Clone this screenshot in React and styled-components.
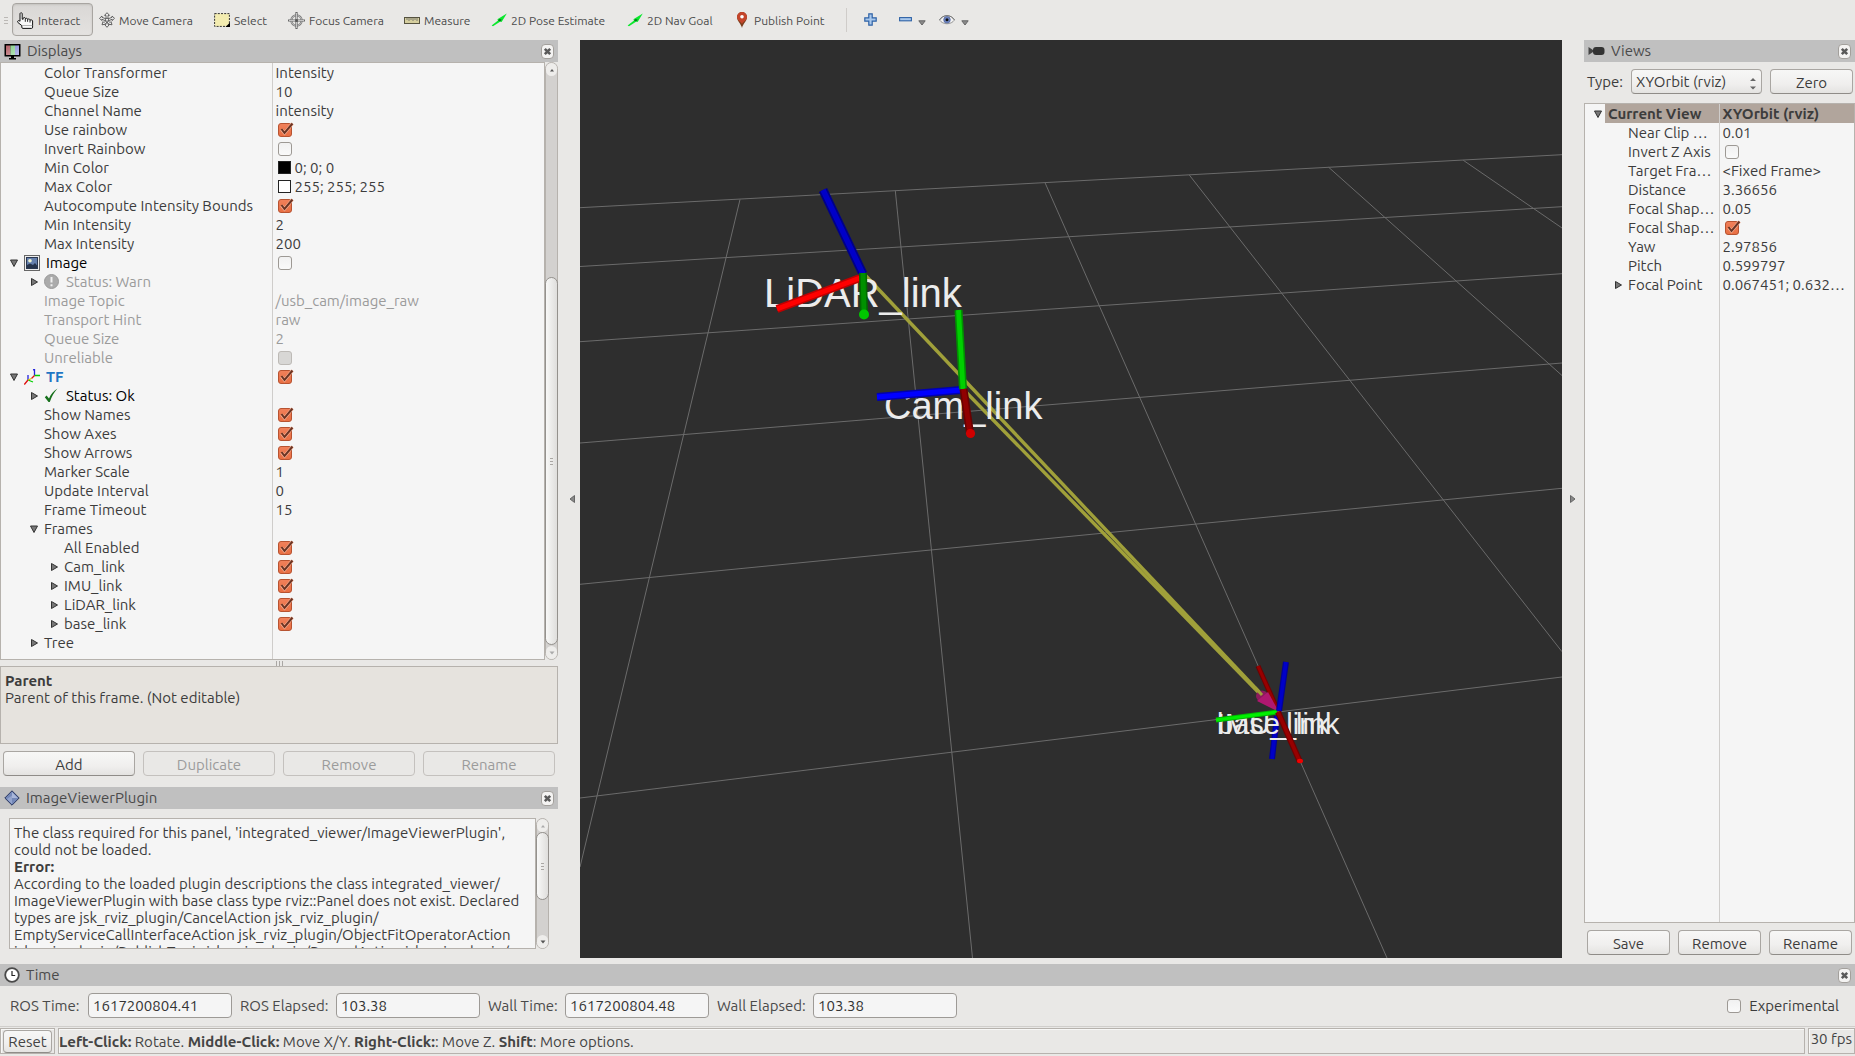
import React, { useId, useState } from "react";
import styled, { createGlobalStyle, css } from "styled-components";

const c = {
  window: "#e9e8e6",
  title: "#c0c0c0",
  base: "#f5f5f5",
  text: "#3c3c3c",
  dim: "#9b9b9b",
  line: "#b6b2ad",
  edge: "#9f9c98",
  scene: "#2e2e2e",
};

const Global = createGlobalStyle`
  *, *::before, *::after { box-sizing: border-box; }
  body {
    margin: 0;
    background: ${c.window};
    color: ${c.text};
    font: 15px/17px Ubuntu, "Noto Sans", "Open Sans", sans-serif;
  }
  button, input, select { font: inherit; color: inherit; margin: 0; }
`;

const Window = styled.div`
  display: flex;
  flex-direction: column;
  height: 100vh;
  overflow: hidden;
`;

/* ---------- toolbar ---------- */

const Toolbar = styled.header`
  display: flex;
  align-items: center;
  height: 40px;
  flex: none;
  padding: 3px 4px 4px 3px;
  font-size: 12px;
  color: #4c4c4c;
`;

const ToolGrip = styled.svg`
  width: 9px;
  flex: none;
`;

const Tool = styled.button`
  display: flex;
  align-items: center;
  gap: 4px;
  width: ${(p) => p.$width}px;
  height: 33px;
  padding: 1px 0 0 5px;
  border: 1px solid transparent;
  border-radius: 4px;
  background: transparent;
  white-space: nowrap;
  ${(p) =>
    p.$active &&
    css`
      padding-left: 4px;
      border-color: #a8a5a1;
      background: linear-gradient(#d9d7d5, #e4e2e0);
      box-shadow: inset 0 1px 2px #c4c2bf;
    `}
  svg { flex: none; }
`;

const ToolDivider = styled.span`
  width: 1px;
  height: 24px;
  margin: 0 12px 0 6px;
  background: #cfccc9;
`;

const MiniTool = styled.button`
  display: flex;
  align-items: center;
  gap: 6px;
  height: 24px;
  padding: 0 5px;
  margin-right: ${(p) => p.$after}px;
  border: 0;
  background: transparent;
  svg:nth-child(2) { margin-top: 6px; }
`;

/* ---------- docks ---------- */

const Main = styled.main`
  display: flex;
  flex: 1;
  min-height: 0;
  margin-bottom: 6px;
`;

const Dock = styled.aside`
  display: flex;
  flex-direction: column;
  flex: none;
  width: ${(p) => p.$width}px;
  min-height: 0;
`;

const TitleBar = styled.div`
  display: flex;
  align-items: center;
  gap: 6px;
  height: 22px;
  flex: none;
  padding: 0 4px;
  background: ${c.title};
  color: #4a4a4a;
  h2 { flex: 1; margin: 0; font: inherit; line-height: 22px; }
`;

const CloseButton = styled.button`
  display: grid;
  place-items: center;
  width: 13px;
  height: 15px;
  padding: 0;
  border: 1px solid #a3a09c;
  border-radius: 4px;
  background: #f4f3f2;
`;

const Handle = styled.button`
  display: flex;
  align-items: center;
  justify-content: center;
  width: 22px;
  flex: none;
  padding: 0 0 0 ${(p) => p.$inset}px;
  border: 0;
  background: transparent;
`;

const TreeArea = styled.div`
  display: flex;
  flex: 1;
  min-height: 0;
`;

const TreeFrame = styled.div`
  flex: 1;
  min-width: 0;
  border: 1px solid ${c.line};
  background: ${c.base};
  overflow: hidden;
`;

const TreeTable = styled.table`
  width: 100%;
  height: 100%;
  table-layout: fixed;
  border-collapse: collapse;
  td { padding: 0; overflow: hidden; white-space: nowrap; }
  td:first-child { border-right: 1px solid #cfcdcb; }
  col:first-child { width: ${(p) => p.$nameWidth}px; }
`;

const Row = styled.tr`
  height: 19px;
  line-height: 19px;
  color: ${(p) => (p.$tone === "dim" ? c.dim : p.$tone === "black" ? "#000" : c.text)};
  font-weight: ${(p) => (p.$selected ? 700 : 400)};
  ${(p) =>
    p.$selected &&
    css`
      td { background: #b1a59c; }
      td:first-child { background: linear-gradient(90deg, ${c.base} 20px, #b1a59c 20px); }
    `}
`;

const NameCell = styled.div`
  display: flex;
  align-items: center;
  height: 19px;
  padding-left: ${(p) => 3 + p.$level * 20}px;
  svg { flex: none; }
`;

const Branch = styled.span`
  display: flex;
  align-items: center;
  justify-content: center;
  width: 20px;
  flex: none;
`;

const RowIcon = styled.span`
  display: flex;
  width: 22px;
  flex: none;
`;

const RowName = styled.span`
  ${(p) => p.$accent && css`color: #1f76c4; font-weight: 700;`}
`;

const ValueCell = styled.div`
  display: flex;
  align-items: center;
  gap: 4px;
  height: 19px;
  padding-left: ${(p) => (p.$boxed ? 5 : 3)}px;
`;

const Swatch = styled.i`
  width: 13px;
  height: 13px;
  border: 1px solid #222;
  background: ${(p) => p.$color};
`;

/* ---------- controls ---------- */

const CheckWrap = styled.span`
  position: relative;
  display: inline-flex;
  width: 14px;
  height: 14px;
  svg {
    position: absolute;
    left: 0;
    top: -2px;
    pointer-events: none;
  }
`;

const CheckInput = styled.input`
  appearance: none;
  width: 14px;
  height: 14px;
  border: 1px solid #9d9994;
  border-radius: 3px;
  background: linear-gradient(#f1f1f1, #fafafa);
  &:checked { border-color: #b75331; background: linear-gradient(#f0805a, #e96f43); }
  &:disabled { border-color: #bdbab6; background: #d8d7d5; }
`;

const Push = styled.button`
  height: 25px;
  flex: ${(p) => (p.$fixed ? "none" : "1 1 0")};
  width: ${(p) => (p.$fixed ? `${p.$fixed}px` : "auto")};
  min-width: 0;
  padding: 1px 0 0;
  border: 1px solid #a9a6a2;
  border-bottom-color: #8f8c88;
  border-radius: 4px;
  background: linear-gradient(#f7f7f6, #f0efee 60%, #e4e3e1);
  &:disabled {
    border-color: #c4c1be;
    background: #e9e8e6;
    color: ${c.dim};
  }
`;

const ButtonRow = styled.div`
  display: flex;
  flex: none;
  gap: 8px;
  padding: 7px 3px ${(p) => p.$bottom}px;
`;

const Bar = styled.div`
  display: flex;
  flex-direction: column;
  flex: none;
  width: 13px;
  border: 1px solid ${c.line};
  border-radius: 7px;
  background: #d3d1cf;
`;

const BarEnd = styled.button`
  display: grid;
  place-items: center;
  height: 13px;
  flex: none;
  padding: 0;
  border: 0;
  border-radius: 6px;
  background: #eeedeb;
`;

const BarSpace = styled.div`
  flex: ${(p) => p.$share} 1 0;
`;

const BarThumb = styled.div`
  display: grid;
  place-items: center;
  flex: ${(p) => p.$share} 1 0;
  margin: 0 -1px;
  border: 1px solid #94918d;
  border-radius: 7px;
  background: linear-gradient(90deg, #f8f8f7, #dfdedc);
`;

const Splitter = styled.div`
  display: grid;
  place-items: center;
  height: 6px;
  flex: none;
`;

const Description = styled.section`
  height: 78px;
  flex: none;
  padding: 5px 4px;
  border: 1px solid ${c.line};
  background: #e6e3de;
  h3, p { margin: 0; font-size: 15px; line-height: 17px; }
`;

const PluginBody = styled.div`
  display: flex;
  height: 149px;
  flex: none;
  padding: 9px;
`;

const PluginText = styled.div`
  flex: 1;
  min-width: 0;
  padding: 5px 4px;
  border: 1px solid ${c.line};
  background: ${c.base};
  overflow: hidden;
  white-space: nowrap;
`;

const Viewport = styled.section`
  flex: 1;
  min-width: 0;
  background: ${c.scene};
  svg { display: block; width: 100%; height: 100%; }
  text { font-family: "Liberation Sans", Arial, sans-serif; fill: #ececec; }
`;

const TypeRow = styled.div`
  display: flex;
  align-items: center;
  flex: none;
  gap: 8px;
  padding: 7px 3px 9px;
  label { flex: 1; }
`;

const SelectWrap = styled.span`
  position: relative;
  svg { position: absolute; right: 5px; top: 8px; pointer-events: none; }
`;

const Select = styled.select`
  appearance: none;
  display: block;
  width: 131px;
  height: 25px;
  padding: 0 4px;
  border: 1px solid #a9a6a2;
  border-bottom-color: #8f8c88;
  border-radius: 4px;
  background: linear-gradient(#f7f7f6, #f0efee 60%, #e4e3e1);
`;

/* ---------- time dock and status ---------- */

const TimeBody = styled.div`
  display: flex;
  align-items: center;
  justify-content: space-between;
  flex: none;
  padding: 7px 16px 8px 10px;
`;

const TimeFields = styled.div`
  display: grid;
  grid-template-columns: 70px 144px 88px 144px 69px 144px 88px 144px;
  align-items: center;
  column-gap: 8px;
  white-space: nowrap;
  color: #4a4a4a;
`;

const Field = styled.input`
  width: 100%;
  height: 25px;
  padding: 0 4px;
  border: 1px solid #9d9a96;
  border-radius: 4px;
  background: ${c.base};
  color: #333;
`;

const Option = styled.label`
  display: flex;
  align-items: center;
  gap: 8px;
`;

const StatusBar = styled.footer`
  display: flex;
  gap: 3px;
  height: 30px;
  flex: none;
  padding: 1px 0 2px;
  border-top: 1px solid #d0cecb;
  color: #444;
`;

const StatusCell = styled.div`
  display: flex;
  align-items: ${(p) => (p.$top ? "flex-start" : "center")};
  flex: ${(p) => (p.$grow ? 1 : "none")};
  padding: 1px ${(p) => (p.$grow ? 0 : 2)}px;
  border: 1px solid ${c.line};
  box-shadow: inset 1px 1px 0 #f8f8f7;
  white-space: pre;
`;

const Reset = styled(Push)`
  height: 23px;
  padding: 0;
`;

/* ---------- small drawings ---------- */

const Arrow = ({ open }) => (
  <svg width="10" height="10" viewBox="0 0 10 10">
    <path d={open ? "M1.5 2H8.5L5 8.5Z" : "M2.5 1.5V8.5L8.5 5Z"} fill="#777" stroke="#333" />
  </svg>
);

const Drop = () => (
  <svg width="8" height="6" viewBox="0 0 8 6">
    <path d="M.8.8H7.2L4 5Z" fill="#8a8a8a" stroke="#666" />
  </svg>
);

const Tri = ({ dir, dim }) => (
  <svg width="6" height="4" viewBox="0 0 6 4">
    <path d={dir === "up" ? "M1 3.5L3 1L5 3.5Z" : "M.5 .5H5.5L3 3.5Z"} fill={dim ? "#aaa" : "#555"} />
  </svg>
);

const Side = ({ dir }) => (
  <svg width="6" height="8" viewBox="0 0 6 8">
    <path d={dir === "left" ? "M5.5 .5V7.5L1 4Z" : "M.5 .5V7.5L5 4Z"} fill="#888" stroke="#666" />
  </svg>
);

const Cross = () => (
  <svg width="9" height="9" viewBox="0 0 9 9">
    <path d="M1.8 1.8L7.2 7.2M7.2 1.8L1.8 7.2" stroke="#5a5a5a" strokeWidth="2.6" />
  </svg>
);

const HandIcon = () => (
  <svg width="17" height="17" viewBox="0 0 17 17">
    <path
      d="M3 1.600C3.400.4 5 .5 5.200 1.600V7.200H6.200V6.200C6.800 5.200 8.100 5.400 8.300 6.200V6.900C8.800 6 10.300 6.100 10.600 7V7.500C11.200 6.700 12.700 6.800 13 7.800V8.300C13.800 7.500 15.500 7.800 15.600 9V15.200C15.600 16 15.200 16.400 14.500 16.400H6C5.200 16.400 4.800 16 4.800 15.200V13.600L.8 10.400C.2 9.400 1 8.200 2.200 8.700L3 9.300Z"
      fill="#f8f8f8"
      stroke="#111"
    />
    <path d="M8.300 7V9.800M10.600 7.500V9.800M13 8.200V10.500" stroke="#111" strokeWidth=".9" />
    <path d="M5 13.500H15.500" stroke="#999" strokeWidth=".7" />
  </svg>
);

const MoveIcon = () => (
  <svg width="16" height="16" viewBox="0 0 16 16" fill="#eee" stroke="#555" strokeWidth=".9">
    <path d="M8 .7L10.5 3.4H9V6.8L13 5.4V4L15.5 6.3L13.2 8.6V7.2L9 9V12.4H10.5L8 15.3L5.5 12.4H7V9L2.8 7.2V8.6L.5 6.3L3 4V5.4L7 6.8V3.4H5.5Z" />
    <path d="M3 12.8L4 9.6L5 10.6L8 7.6L11 10.6L12 9.6L13 12.8L9.8 12.2L8 10L6.2 12.2Z" />
    <circle cx="8" cy="7.8" r="1.6" />
  </svg>
);

const SelectIcon = () => (
  <svg width="16" height="14" viewBox="0 0 16 14">
    <rect x=".6" y=".6" width="14.8" height="12.8" fill="#f3ecb0" stroke="#333" strokeDasharray="2 1.2" />
    <path d="M16 9.5V14H11.5Z" fill="#000" />
  </svg>
);

const FocusIcon = () => (
  <svg width="17" height="17" viewBox="0 0 17 17" fill="none">
    <circle cx="8.5" cy="8.5" r="5.2" stroke="#777" strokeWidth="2" />
    <circle cx="8.5" cy="8.5" r="5.2" stroke="#ddd" strokeWidth=".7" />
    <path d="M8.5 0V17M0 8.5H17" stroke="#666" strokeWidth="2.2" />
    <path d="M8.5 1V16M1 8.5H16" stroke="#ddd" strokeWidth=".8" />
    <circle cx="8.5" cy="8.5" r="1.5" fill="#555" />
  </svg>
);

const RulerIcon = () => (
  <svg width="16" height="8" viewBox="0 0 16 8">
    <rect x=".5" y="1.5" width="15" height="6" fill="#d6cf9f" stroke="#55523f" />
    <path d="M3 2V4M5 2V5M7 2V4M9 2V5M11 2V4M13 2V5" stroke="#666" strokeWidth=".8" />
  </svg>
);

const GreenArrow = () => (
  <svg width="16" height="14" viewBox="0 0 16 14">
    <path d="M.6 12.6L7 7.4L6.4 6.2L15.8.6L10.6 9L9.4 8.4L2 13.2Z" fill="#0be82e" />
    <path d="M7 7.4L9.4 8.4L10.6 6.4L8.4 6Z" fill="#067a18" />
  </svg>
);

const PinIcon = () => (
  <svg width="16" height="16" viewBox="0 0 16 16">
    <path d="M8 16C7.2 12 3 9.2 3 5a5 5 0 0 1 10 0C13 9.2 8.8 12 8 16Z" fill="#7a3d1c" />
    <path d="M8 12C6.5 9.5 3 8.2 3 5a5 5 0 0 1 10 0C13 8.2 9.5 9.5 8 12Z" fill="#c4452b" />
    <circle cx="8" cy="4.8" r="1.8" fill="#fff" />
  </svg>
);

const PlusIcon = () => (
  <svg width="13" height="13" viewBox="0 0 13 13">
    <path d="M4.8.8H8.2V4.8H12.2V8.2H8.2V12.2H4.8V8.2H.8V4.8H4.8Z" fill="#a9c8ec" stroke="#2f62a6" strokeWidth="1.2" />
  </svg>
);

const MinusIcon = () => (
  <svg width="13" height="13" viewBox="0 0 13 13">
    <rect x=".6" y="4.6" width="11.8" height="3.2" fill="#a9c8ec" stroke="#2f62a6" strokeWidth="1.1" />
  </svg>
);

const EyeIcon = () => (
  <svg width="16" height="12" viewBox="0 0 16 12">
    <path d="M.5 6C4 .2 12 .2 15.5 6C12 11 4 11 .5 6Z" fill="#f2f2f2" stroke="#999" />
    <path d="M.5 6C4 .2 12 .2 15.5 6" fill="none" stroke="#777" />
    <circle cx="8" cy="5.8" r="3.3" fill="#6f86c0" stroke="#3f5596" strokeWidth=".6" />
    <circle cx="8" cy="5.8" r="1.5" fill="#111" />
  </svg>
);

const MonitorIcon = () => (
  <svg width="17" height="17" viewBox="0 0 17 17">
    <defs>
      <linearGradient id="screen" x1="0" y1="0" x2="1" y2="1">
        <stop offset="0" stopColor="#fff" stopOpacity="0" />
        <stop offset="1" stopColor="#fff" stopOpacity=".45" />
      </linearGradient>
    </defs>
    <rect x=".5" y="1" width="16" height="12.5" rx=".6" fill="#000" />
    <path d="M2 2.500H6.500V12H2Z" fill="#b35f66" />
    <path d="M6.500 2.500H11V12H6.500Z" fill="#83cf88" />
    <path d="M11 2.500H15V12H11Z" fill="#8085d6" />
    <path d="M2 2.500H15V12H2Z" fill="url(#screen)" />
    <path d="M7 13H10V15H12V16.500H5V15H7Z" fill="#000" />
  </svg>
);

const DiamondIcon = () => (
  <svg width="16" height="16" viewBox="0 0 16 16">
    <path d="M8 .8L15.2 8L8 15.2L.8 8Z" fill="#7488b8" stroke="#27355e" />
    <path d="M8 2.2L13.8 8H8Z" fill="#a9b7da" />
    <path d="M8 14L3 9L8 5.5Z" fill="#93a4cd" />
  </svg>
);

const CameraIcon = () => (
  <svg width="17" height="10" viewBox="0 0 17 10">
    <path d="M.5 1L5 4V6L.5 9Z" fill="#444" />
    <rect x="5" y="1" width="11.5" height="8" rx="3" fill="#333" />
  </svg>
);

const ClockIcon = () => (
  <svg width="16" height="16" viewBox="0 0 16 16" fill="none">
    <circle cx="8" cy="8" r="6.8" fill="#fff" stroke="#4a4a4a" strokeWidth="1.8" />
    <path d="M8 4V8.5H11.2" stroke="#222" strokeWidth="1.2" />
  </svg>
);

const PictureIcon = () => (
  <svg width="16" height="16" viewBox="0 0 16 16">
    <rect x=".5" y=".5" width="15" height="15" fill="#eee" stroke="#666" />
    <rect x="2.5" y="2.5" width="11" height="11" fill="#6580ad" stroke="#2b3850" />
    <path d="M3 13V10L6 8.5L9 10L11 8L13 10.5V13Z" fill="#26344c" />
    <circle cx="6" cy="5.8" r="1.8" fill="#f1f3d0" />
  </svg>
);

const WarnIcon = () => (
  <svg width="16" height="16" viewBox="0 0 16 16">
    <circle cx="7.5" cy="7.5" r="7" fill="#ababab" stroke="#9a9a9a" />
    <path d="M7.5 3V8.5M7.5 10.2V12.2" stroke="#f0f0f0" strokeWidth="2" />
  </svg>
);

const TfIcon = () => (
  <svg width="16" height="16" viewBox="0 0 16 16" fill="none" strokeWidth="1.3">
    <path d="M10.5 6.500V.5L9 .8M4 11V6" stroke="#2222dd" />
    <path d="M10.5 6.500H16M4 11L9 13" stroke="#00d000" />
    <path d="M10.5 6.500L7.500 9.500M4 11L.3 15.500" stroke="#e01010" />
    <path d="M7.500 9.500L4 11" stroke="#d0c000" />
  </svg>
);

const OkIcon = () => (
  <svg width="14" height="15" viewBox="0 0 14 15">
    <path d="M.8 9.2L2.6 7.6L5 10.6C7 6 9.5 3 13.5.6C10 4.5 7.8 8.5 5.8 14H4.5Z" fill="#17701c" />
  </svg>
);

const Grip = ({ upright }) => (
  <svg width={upright ? 8 : 3} height={upright ? 5 : 8} viewBox={upright ? "0 0 8 5" : "0 0 3 8"}>
    <path d={upright ? "M1.5 0V5M4.5 0V5M7.5 0V5" : "M0 1.5H3M0 4.5H3M0 7.5H3"} stroke="#aaa7a4" />
  </svg>
);

/* ---------- shared parts ---------- */

function Check({ on, ...rest }) {
  const [checked, setChecked] = useState(!!on);
  return (
    <CheckWrap>
      <CheckInput type="checkbox" checked={checked} onChange={() => setChecked(!checked)} {...rest} />
      {checked && (
        <svg width="16" height="16" viewBox="0 0 16 16">
          <path d="M3.5 8.5L6.5 12L14.5 2.5" fill="none" stroke="#f6b49a" strokeWidth="3.2" />
          <path d="M3.5 8L6.5 12L14.5 2.5" fill="none" stroke="#6b3423" strokeWidth="2" />
        </svg>
      )}
    </CheckWrap>
  );
}

const Title = ({ icon, children }) => (
  <TitleBar>
    {icon}
    <h2>{children}</h2>
    <CloseButton aria-label={`Close ${children}`}>
      <Cross />
    </CloseButton>
  </TitleBar>
);

const ScrollBar = ({ before, thumb, after, atTop, atEnd }) => (
  <Bar>
    <BarEnd aria-label="Scroll up"><Tri dir="up" dim={atTop} /></BarEnd>
    <BarSpace $share={before} />
    <BarThumb $share={thumb}><Grip /></BarThumb>
    <BarSpace $share={after} />
    <BarEnd aria-label="Scroll down"><Tri dir="down" dim={atEnd} /></BarEnd>
  </Bar>
);

function Tree({ rows, nameWidth, label }) {
  const id = useId();
  return (
    <TreeFrame>
      <TreeTable $nameWidth={nameWidth} aria-label={label}>
        <colgroup><col /><col /></colgroup>
        <tbody>
          {rows.map((r, i) => (
            <Row key={i} $tone={r.tone} $selected={r.selected}>
              <td>
                <NameCell $level={r.level}>
                  <Branch>{r.open !== undefined && <Arrow open={r.open} />}</Branch>
                  {r.icon && <RowIcon>{r.icon}</RowIcon>}
                  <RowName id={`${id}-${i}`} $accent={r.accent}>{r.name}</RowName>
                </NameCell>
              </td>
              <td>
                <ValueCell $boxed={r.check !== undefined || r.color}>
                  {r.check !== undefined && (
                    <Check on={r.check} disabled={r.tone === "dim"} aria-labelledby={`${id}-${i}`} />
                  )}
                  {r.color && <Swatch $color={r.color} />}
                  {r.value}
                </ValueCell>
              </td>
            </Row>
          ))}
          <tr><td /><td /></tr>
        </tbody>
      </TreeTable>
    </TreeFrame>
  );
}

/* ---------- data ---------- */

const tools = [
  ["Interact", 81, <HandIcon />],
  ["Move Camera", 115, <MoveIcon />],
  ["Select", 74, <SelectIcon />],
  ["Focus Camera", 116, <FocusIcon />],
  ["Measure", 87, <RulerIcon />],
  ["2D Pose Estimate", 136, <GreenArrow />],
  ["2D Nav Goal", 107, <GreenArrow />],
  ["Publish Point", 112, <PinIcon />],
];

const displays = [
  { level: 1, name: "Color Transformer", value: "Intensity" },
  { level: 1, name: "Queue Size", value: "10" },
  { level: 1, name: "Channel Name", value: "intensity" },
  { level: 1, name: "Use rainbow", check: true },
  { level: 1, name: "Invert Rainbow", check: false },
  { level: 1, name: "Min Color", value: "0; 0; 0", color: "#000" },
  { level: 1, name: "Max Color", value: "255; 255; 255", color: "#fff" },
  { level: 1, name: "Autocompute Intensity Bounds", check: true },
  { level: 1, name: "Min Intensity", value: "2" },
  { level: 1, name: "Max Intensity", value: "200" },
  { level: 0, name: "Image", open: true, icon: <PictureIcon />, check: false, tone: "black" },
  { level: 1, name: "Status: Warn", open: false, icon: <WarnIcon />, tone: "dim" },
  { level: 1, name: "Image Topic", value: "/usb_cam/image_raw", tone: "dim" },
  { level: 1, name: "Transport Hint", value: "raw", tone: "dim" },
  { level: 1, name: "Queue Size", value: "2", tone: "dim" },
  { level: 1, name: "Unreliable", check: false, tone: "dim" },
  { level: 0, name: "TF", open: true, icon: <TfIcon />, check: true, accent: true },
  { level: 1, name: "Status: Ok", open: false, icon: <OkIcon />, tone: "black" },
  { level: 1, name: "Show Names", check: true },
  { level: 1, name: "Show Axes", check: true },
  { level: 1, name: "Show Arrows", check: true },
  { level: 1, name: "Marker Scale", value: "1" },
  { level: 1, name: "Update Interval", value: "0" },
  { level: 1, name: "Frame Timeout", value: "15" },
  { level: 1, name: "Frames", open: true },
  { level: 2, name: "All Enabled", check: true },
  { level: 2, name: "Cam_link", open: false, check: true },
  { level: 2, name: "IMU_link", open: false, check: true },
  { level: 2, name: "LiDAR_link", open: false, check: true },
  { level: 2, name: "base_link", open: false, check: true },
  { level: 1, name: "Tree", open: false },
];

const view = [
  { level: 0, name: "Current View", value: "XYOrbit (rviz)", open: true, selected: true },
  { level: 1, name: "Near Clip …", value: "0.01" },
  { level: 1, name: "Invert Z Axis", check: false },
  { level: 1, name: "Target Fra…", value: "<Fixed Frame>" },
  { level: 1, name: "Distance", value: "3.36656" },
  { level: 1, name: "Focal Shap…", value: "0.05" },
  { level: 1, name: "Focal Shap…", check: true },
  { level: 1, name: "Yaw", value: "2.97856" },
  { level: 1, name: "Pitch", value: "0.599797" },
  { level: 1, name: "Focal Point", value: "0.067451; 0.632…", open: false },
];

const times = [
  ["ROS Time:", "1617200804.41"],
  ["ROS Elapsed:", "103.38"],
  ["Wall Time:", "1617200804.48"],
  ["Wall Elapsed:", "103.38"],
];

const gridLines = [
  [580, 207.7, 1562, 154.7],
  [580, 266.5, 1562, 206.7],
  [580, 341.7, 1562, 273.7],
  [580, 443, 1562, 363],
  [580, 584.3, 1562, 488.3],
  [580, 798, 1562, 677],
  [740, 199.5, 580, 867],
  [895.3, 190.7, 972.5, 958],
  [1045, 182.7, 1387, 958],
  [1189.3, 175, 1562, 651.7],
  [1328.7, 167.3, 1562, 375.5],
  [1463.3, 160.3, 1562, 228],
];

const Rod = ({ from, to, width, color, shade }) => (
  <g strokeWidth={width}>
    <line x1={from[0]} y1={from[1]} x2={to[0]} y2={to[1]} stroke={shade} />
    <line x1={from[0]} y1={from[1]} x2={to[0]} y2={to[1]} stroke={color} strokeWidth={width * 0.6} />
  </g>
);

const Scene = () => (
  <svg viewBox="580 40 982 918" preserveAspectRatio="xMidYMid slice" role="img" aria-label="3D view of TF frames">
    <g stroke="#6b6b6b">
      {gridLines.map(([x1, y1, x2, y2], i) => (
        <line key={i} x1={x1} y1={y1} x2={x2} y2={y2} />
      ))}
    </g>
    <g stroke="#a0a03a" strokeWidth="3.4">
      <line x1="866" y1="276" x2="1262" y2="695" />
      <line x1="963" y1="389" x2="1261" y2="695" />
    </g>
    <Rod from={[1277, 716]} to={[1272, 759]} width={6} color="#0000c8" shade="#00009a" />
    <text x="764" y="307" fontSize="40">LiDAR_link</text>
    <text x="884" y="419" fontSize="38">Cam_link</text>
    <text x="1217" y="734" fontSize="29">base_link</text>
    <text x="1217" y="734" fontSize="29">IMU_link</text>

    <Rod from={[823, 190]} to={[863, 274]} width={9} color="#0000c8" shade="#000088" />
    <Rod from={[777, 309]} to={[860, 278]} width={8} color="#ff0000" shade="#c00000" />
    <Rod from={[863, 273]} to={[864, 314]} width={8} color="#009000" shade="#006a00" />
    <circle cx="864" cy="314.5" r="5" fill="#00c800" />

    <Rod from={[877, 397]} to={[961, 390]} width={8} color="#0000ff" shade="#0000b0" />
    <Rod from={[958.5, 310]} to={[963, 389]} width={8} color="#00d000" shade="#009000" />
    <Rod from={[963.5, 389]} to={[970, 433]} width={8} color="#900000" shade="#6a0000" />
    <circle cx="970.5" cy="433.5" r="4.6" fill="#d00000" />

    <Rod from={[1258, 666]} to={[1278, 711]} width={5} color="#980000" shade="#700000" />
    <ellipse cx="1262" cy="696" rx="6" ry="5.5" fill="#8c1a5c" />
    <path d="M1257 701L1268 692L1279 712Z" fill="#b01870" />
    <line x1="1255" y1="687.5" x2="1262" y2="695" stroke="#a0a03a" strokeWidth="3" />
    <Rod from={[1216, 720]} to={[1277, 712]} width={5} color="#00f000" shade="#00b800" />
    <Rod from={[1286, 662]} to={[1279, 711]} width={6} color="#0000c8" shade="#00009a" />
    <Rod from={[1278, 712]} to={[1300, 762]} width={6} color="#980000" shade="#700000" />
    <ellipse cx="1300" cy="761" rx="3" ry="2.2" fill="#f00000" />
  </svg>
);

export default function App() {
  return (
    <Window>
      <Global />
      <Toolbar>
        <ToolGrip height="8" viewBox="0 0 9 8">
          <path d="M1 1.5H5M1 4.5H5M1 7.5H5" stroke="#bbb8b5" />
        </ToolGrip>
        {tools.map(([name, width, icon]) => (
          <Tool key={name} $width={width} $active={name === "Interact"}>
            {icon}
            {name}
          </Tool>
        ))}
        <ToolDivider />
        <MiniTool $after={12} aria-label="Add tool"><PlusIcon /></MiniTool>
        <MiniTool $after={3} aria-label="Remove tool"><MinusIcon /><Drop /></MiniTool>
        <MiniTool $after={0} aria-label="Tool visibility"><EyeIcon /><Drop /></MiniTool>
      </Toolbar>

      <Main>
        <Dock $width={558}>
          <Title icon={<MonitorIcon />}>Displays</Title>
          <TreeArea>
            <Tree rows={displays} nameWidth={271} label="Displays" />
            <ScrollBar before={202} thumb={368} after={1} atEnd />
          </TreeArea>
          <Splitter><Grip upright /></Splitter>
          <Description>
            <h3>Parent</h3>
            <p>Parent of this frame. (Not editable)</p>
          </Description>
          <ButtonRow $bottom={11}>
            <Push>Add</Push>
            <Push disabled>Duplicate</Push>
            <Push disabled>Remove</Push>
            <Push disabled>Rename</Push>
          </ButtonRow>
          <Title icon={<DiamondIcon />}>ImageViewerPlugin</Title>
          <PluginBody>
            <PluginText>
              The class required for this panel, 'integrated_viewer/ImageViewerPlugin',<br />
              could not be loaded.<br />
              <b>Error:</b><br />
              According to the loaded plugin descriptions the class integrated_viewer/<br />
              ImageViewerPlugin with base class type rviz::Panel does not exist. Declared<br />
              types are jsk_rviz_plugin/CancelAction jsk_rviz_plugin/<br />
              EmptyServiceCallInterfaceAction jsk_rviz_plugin/ObjectFitOperatorAction<br />
              jsk_rviz_plugin/PublishTopic jsk_rviz_plugin/RecordAction jsk_rviz_plugin/
            </PluginText>
            <ScrollBar before={0} thumb={68} after={36} atTop />
          </PluginBody>
        </Dock>

        <Handle $inset={6} aria-label="Hide left dock"><Side dir="left" /></Handle>
        <Viewport><Scene /></Viewport>
        <Handle $inset={0} aria-label="Hide right dock"><Side dir="right" /></Handle>

        <Dock $width={271}>
          <Title icon={<CameraIcon />}>Views</Title>
          <TypeRow>
            <label htmlFor="view-type">Type:</label>
            <SelectWrap>
              <Select id="view-type" defaultValue="XYOrbit (rviz)">
                <option>XYOrbit (rviz)</option>
              </Select>
              <svg width="8" height="13" viewBox="0 0 8 13">
                <path d="M1 4L4 1L7 4ZM1 9.5L4 12.5L7 9.5Z" fill="#666" />
              </svg>
            </SelectWrap>
            <Push $fixed={83}>Zero</Push>
          </TypeRow>
          <TreeArea>
            <Tree rows={view} nameWidth={134} label="Current view" />
          </TreeArea>
          <ButtonRow $bottom={3}>
            <Push>Save</Push>
            <Push>Remove</Push>
            <Push>Rename</Push>
          </ButtonRow>
        </Dock>
      </Main>

      <Title icon={<ClockIcon />}>Time</Title>
      <TimeBody>
        <TimeFields>
          {times.map(([name, value], i) => (
            <React.Fragment key={name}>
              <label htmlFor={`time-${i}`}>{name}</label>
              <Field id={`time-${i}`} defaultValue={value} />
            </React.Fragment>
          ))}
        </TimeFields>
        <Option>
          <Check />
          Experimental
        </Option>
      </TimeBody>
      <StatusBar>
        <StatusCell><Reset $fixed={49}>Reset</Reset></StatusCell>
        <StatusCell $grow>
          <b>Left-Click:</b> Rotate. <b>Middle-Click:</b> Move X/Y. <b>Right-Click:</b>: Move Z. <b>Shift</b>: More options.
        </StatusCell>
        <StatusCell $top>30 fps</StatusCell>
      </StatusBar>
    </Window>
  );
}
